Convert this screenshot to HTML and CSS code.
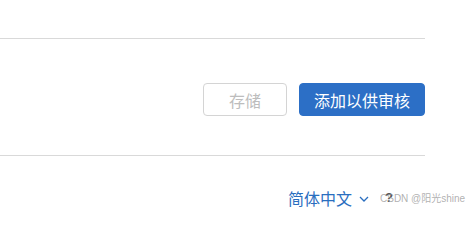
FILE: index.html
```html
<!DOCTYPE html>
<html lang="zh-CN">
<head>
<meta charset="utf-8">
<link rel="stylesheet" href="styles.css">
</head>
<body>
<div class="page">
  <div class="rule rule-top"></div>
  <div class="actions">
    <button class="btn btn-save" type="button">存储</button>
    <button class="btn btn-submit" type="button">添加以供审核</button>
  </div>
  <div class="rule rule-bottom"></div>
  <div class="footer">
    <span class="lang">简体中文</span>
    <svg class="chev" width="10" height="6" viewBox="0 0 10 6"><path d="M1 1l4 4 4-4" fill="none" stroke="#2a6ebf" stroke-width="1.3"/></svg>
    <span class="help">?</span>
  </div>
</div>
<div class="watermark">CSDN @阳光shine</div>
</body>
</html>
```
FILE: styles.css
```css
html, body {
  margin: 0;
  padding: 0;
  background: #ffffff;
  font-family: "Noto Sans CJK SC", "Noto Sans", sans-serif;
}
body {
  width: 474px;
  height: 207px;
  overflow: hidden;
  position: relative;
}
.page {
  width: 425px;
  display: flex;
  flex-direction: column;
}
.rule {
  height: 1px;
  background: #d9d9d9;
}
.rule-top {
  margin-top: 38px;
}
.actions {
  display: flex;
  justify-content: flex-end;
  gap: 12px;
  margin-top: 44px;
}
.btn {
  height: 33px;
  box-sizing: border-box;
  border-radius: 4px;
  font-family: "Noto Sans CJK SC", sans-serif;
  font-size: 16px;
  line-height: 1;
  padding: 0;
  cursor: pointer;
}
.btn-save {
  width: 84px;
  background: #ffffff;
  border: 1px solid #d4d4d4;
  color: #bdbdbd;
}
.btn-submit {
  width: 126px;
  background: #2c6fc6;
  border: 1px solid #2c6fc6;
  color: #ffffff;
}
.rule-bottom {
  margin-top: 39px;
}
.footer {
  display: flex;
  justify-content: flex-end;
  align-items: center;
  margin-top: 30px;
  padding-right: 32px;
  height: 24px;
}
.lang {
  color: #2a6ebf;
  font-size: 16px;
  line-height: 24px;
}
.chev {
  margin-left: 7px;
  margin-top: 2px;
}
.help {
  margin-left: 16px;
  color: #555555;
  font-family: "Liberation Sans", sans-serif;
  font-size: 13px;
  font-weight: bold;
  line-height: 24px;
}
.watermark {
  position: absolute;
  left: 380px;
  top: 190px;
  font-family: "Liberation Sans", "Noto Sans CJK SC", sans-serif;
  font-size: 10px;
  color: rgba(150, 150, 150, 0.75);
  white-space: nowrap;
}
```
